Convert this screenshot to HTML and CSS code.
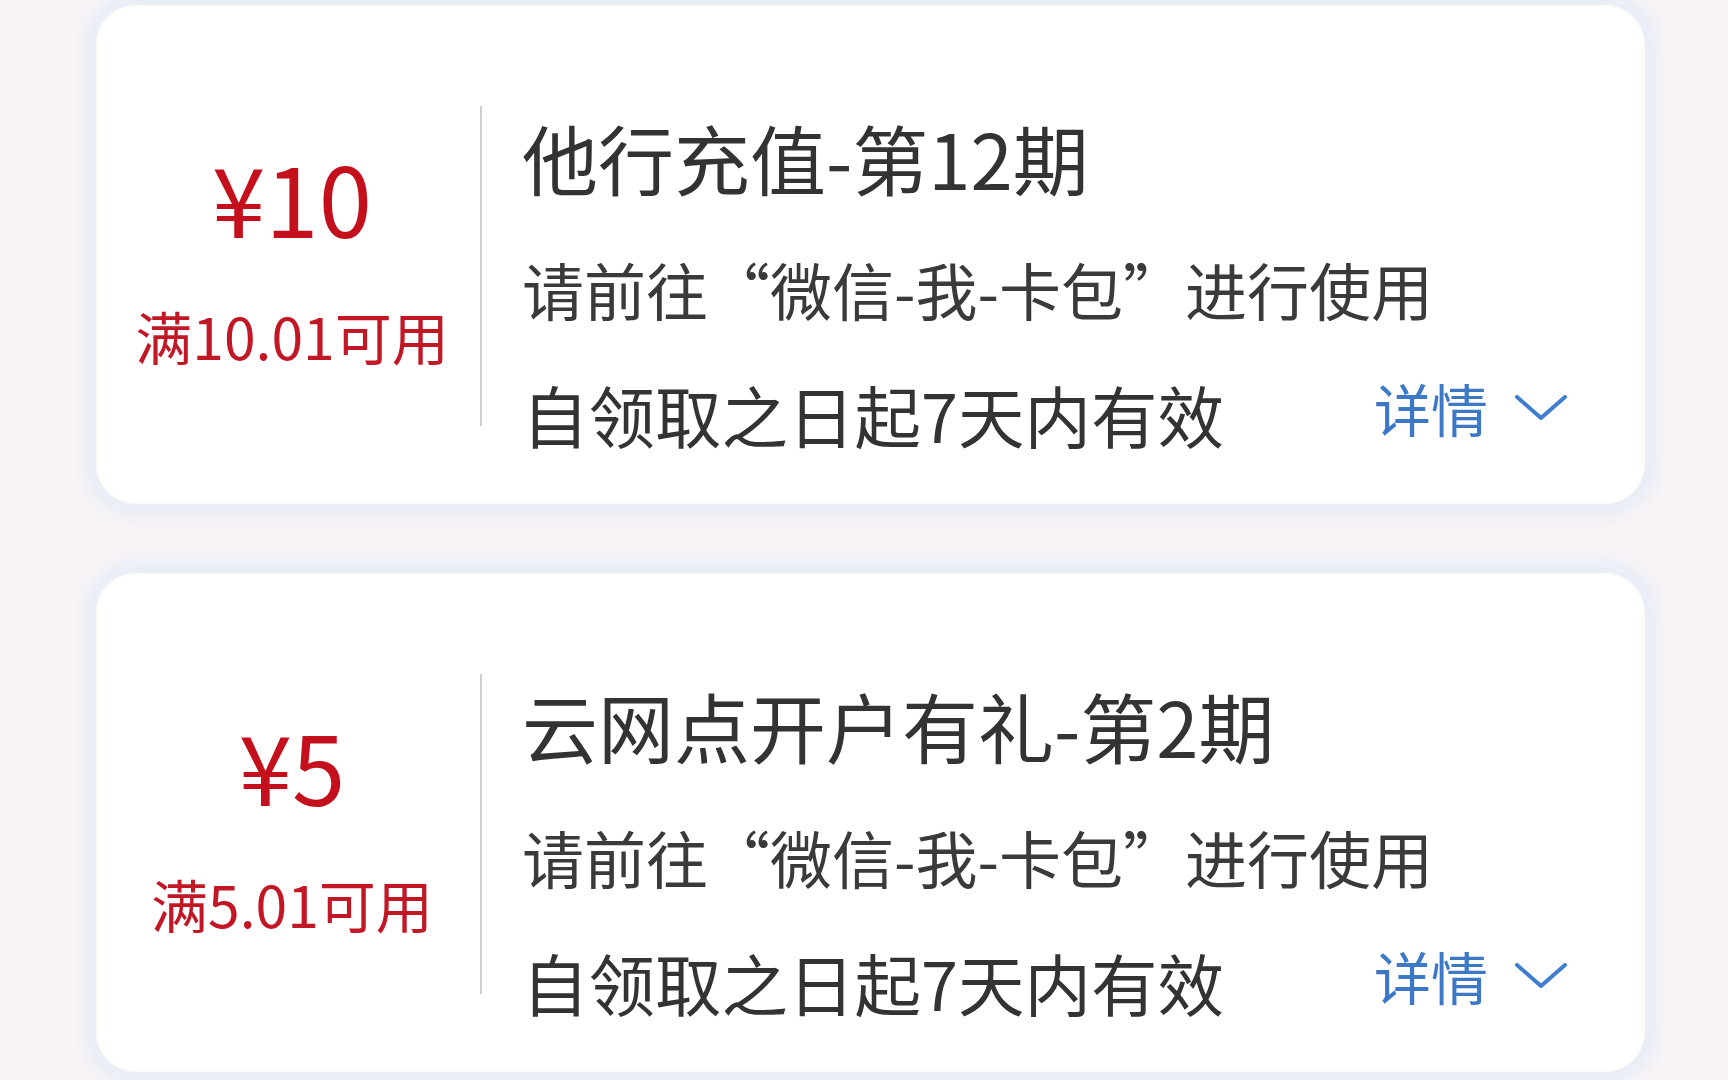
FILE: index.html
```html
<!DOCTYPE html>
<html lang="zh-CN">
<head>
<meta charset="utf-8">
<title>优惠券</title>
<link rel="stylesheet" href="styles.css">
</head>
<body>
<div class="list">
  <div class="card">
    <div class="amount-col">
      <div class="amount">¥10</div>
      <div class="cond">满10.01可用</div>
    </div>
    <div class="divider"></div>
    <div class="info">
      <div class="title">他行充值-第12期</div>
      <div class="desc">请前往“微信-我-卡包”进行使用</div>
      <div class="row">
        <div class="valid">自领取之日起7天内有效</div>
        <div class="more">详情<svg class="chev" viewBox="0 0 52 26" width="52" height="26"><path d="M2 2 L26 23 L50 2" fill="none" stroke="currentColor" stroke-width="4" stroke-linecap="round" stroke-linejoin="round"/></svg></div>
      </div>
    </div>
  </div>
  <div class="card">
    <div class="amount-col">
      <div class="amount">¥5</div>
      <div class="cond">满5.01可用</div>
    </div>
    <div class="divider"></div>
    <div class="info">
      <div class="title">云网点开户有礼-第2期</div>
      <div class="desc">请前往“微信-我-卡包”进行使用</div>
      <div class="row">
        <div class="valid">自领取之日起7天内有效</div>
        <div class="more">详情<svg class="chev" viewBox="0 0 52 26" width="52" height="26"><path d="M2 2 L26 23 L50 2" fill="none" stroke="currentColor" stroke-width="4" stroke-linecap="round" stroke-linejoin="round"/></svg></div>
      </div>
    </div>
  </div>
</div>
</body>
</html>
```
FILE: styles.css
```css
html, body {
  margin: 0;
  padding: 0;
}
body {
  background: #f7f3f6;
  font-family: "Noto Sans CJK SC", "Noto Sans", sans-serif;
  width: 1728px;
  height: 1080px;
  overflow: hidden;
}
.list {
  display: flex;
  flex-direction: column;
  gap: 69px;
  padding: 5px 0 0 96px;
}
.card {
  width: 1549px;
  height: 499px;
  flex: none;
  background: #ffffff;
  border-radius: 40px;
  box-shadow: 0 0 3px 1px #fffaf2 inset, 0 0 12px 13px #eaeef7;
  display: flex;
  box-sizing: border-box;
}
.amount-col {
  width: 384px;
  flex: none;
  display: flex;
  flex-direction: column;
  align-items: center;
  padding: 144px 0 0 8px;
  box-sizing: border-box;
  color: #c4101c;
}
.amount {
  font-size: 96px;
  line-height: 95px;
}
.cond {
  font-size: 57px;
  line-height: 58px;
  margin-top: 62px;
  color: #c21826;
}
.divider {
  width: 2px;
  height: 320px;
  margin-top: 101px;
  background: #cfcfcf;
  flex: none;
}
.info {
  flex: 1;
  padding: 114px 78px 0 40px;
  display: flex;
  flex-direction: column;
  color: #333333;
}
.title {
  font-size: 76px;
  line-height: 76px;
}
.desc {
  font-size: 62px;
  line-height: 61px;
  margin-top: 64px;
  color: #3a3a3a;
}
.row {
  display: flex;
  align-items: center;
  justify-content: space-between;
  margin-top: 58px;
}
.valid {
  font-size: 66.5px;
  line-height: 66px;
  color: #333333;
}
.more {
  display: flex;
  align-items: center;
  gap: 27px;
  font-size: 57px;
  line-height: 58px;
  color: #3c78c6;
  padding-bottom: 14px;
}
.chev {
  color: #3f7ed0;
  margin-top: 2px;
}
```
